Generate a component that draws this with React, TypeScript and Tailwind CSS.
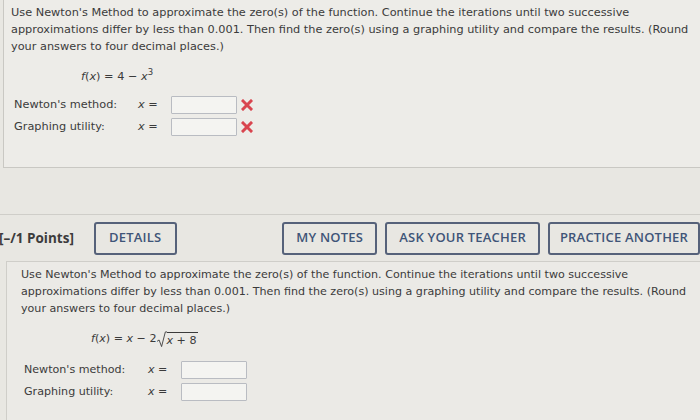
import React from 'react';

const RedX = () => (
    <svg viewBox="0 0 12 12" className="w-[12px] h-[12px]">
        <path d="M2 2 L10 10 M10 2 L2 10" stroke="#d9454f" strokeWidth="3" strokeLinecap="square" />
    </svg>
);

const AnswerRow = ({ label, mark }: { label: string; mark: boolean }) => (
    <div className="flex items-center h-[22px]">
        <span className="w-[124px]">{label}</span>
        <span className="w-[33px]">
            <i>x</i> =
        </span>
        <span className="w-[66px] h-[18px] border border-[#b9bcc2] bg-[#f4f4f1] rounded-[1px]" />
        {mark && (
            <span className="ml-[4px] flex items-center">
                <RedX />
            </span>
        )}
    </div>
);

const Problem = ({ fx, marks, rowsTop }: { fx: React.ReactNode; marks: boolean; rowsTop: string }) => (
    <>
        <div className="leading-[17px] whitespace-nowrap">
            <div>Use Newton's Method to approximate the zero(s) of the function. Continue the iterations until two successive</div>
            <div>approximations differ by less than 0.001. Then find the zero(s) using a graphing utility and compare the results. (Round</div>
            <div>your answers to four decimal places.)</div>
        </div>
        <div className="pl-[70px] mt-[11px] h-[20px] flex items-end">{fx}</div>
        <div className={`${rowsTop} pl-[3px] flex flex-col`}>
            <AnswerRow label="Newton's method:" mark={marks} />
            <AnswerRow label="Graphing utility:" mark={marks} />
        </div>
    </>
);

const Btn = ({ children, w }: { children: React.ReactNode; w: string }) => (
    <div className={`h-[33px] ${w} shrink-0 border-2 border-[#56627a] rounded-[3px] flex items-center justify-center text-[#3f5578] text-[13px] font-semibold tracking-[0.2px]`}>
        {children}
    </div>
);

export default function App() {
    return (
        <div className="w-[700px] h-[420px] overflow-hidden bg-[#e8e7e2] text-[#3b3b3b] font-['DejaVu_Sans',Verdana,sans-serif] text-[11.3px]">
            <div className="ml-[3px] h-[168px] border-l border-b border-[#c9c8c3] bg-[#edece8] pl-[7px] pt-[4px] pr-[4px]">
                <Problem
                    marks={true}
                    rowsTop="mt-[8px]"
                    fx={
                        <span>
                            <i>f</i>(<i>x</i>) = 4 − <i>x</i>
                            <sup className="text-[8.5px] relative -top-[5px]">3</sup>
                        </span>
                    }
                />
            </div>
            <div className="h-[46px]" />
            <div className="border-t border-[#cfcec9] h-[47px] flex items-center font-['Open_Sans',sans-serif]">
                <span className="w-[96px] text-[13.5px] font-bold text-[#3c3c3c] -ml-[1px]">[–/1 Points]</span>
                <Btn w="w-[83px]">DETAILS</Btn>
                <div className="w-[107px]" />
                <Btn w="w-[95px]">MY NOTES</Btn>
                <div className="w-[8px]" />
                <Btn w="w-[155px]">ASK YOUR TEACHER</Btn>
                <div className="w-[8px]" />
                <Btn w="w-[152px]">PRACTICE ANOTHER</Btn>
            </div>
            <div className="ml-[6px] h-[160px] border-l border-t border-[#cfcec9] bg-[#ebeae6] pl-[14px] pt-[4px] pr-[4px] text-[11.1px]">
                <Problem
                    marks={false}
                    rowsTop="mt-[11px]"
                    fx={
                        <span className="flex items-end">
                            <span>
                                <i>f</i>(<i>x</i>) = <i>x</i> − 2
                            </span>
                            <svg viewBox="0 0 12 18" className="w-[10px] h-[17px]" preserveAspectRatio="none">
                                <path d="M0 11 L2.5 9.5 L5.5 16.5 L10 1 L12 1" stroke="#3b3b3b" strokeWidth="1" fill="none" />
                            </svg>
                            <span className="border-t border-[#3b3b3b] pt-[1px] leading-[14px] pr-[1px]">
                                <i>x</i> + 8
                            </span>
                        </span>
                    }
                />
            </div>
        </div>
    );
}
